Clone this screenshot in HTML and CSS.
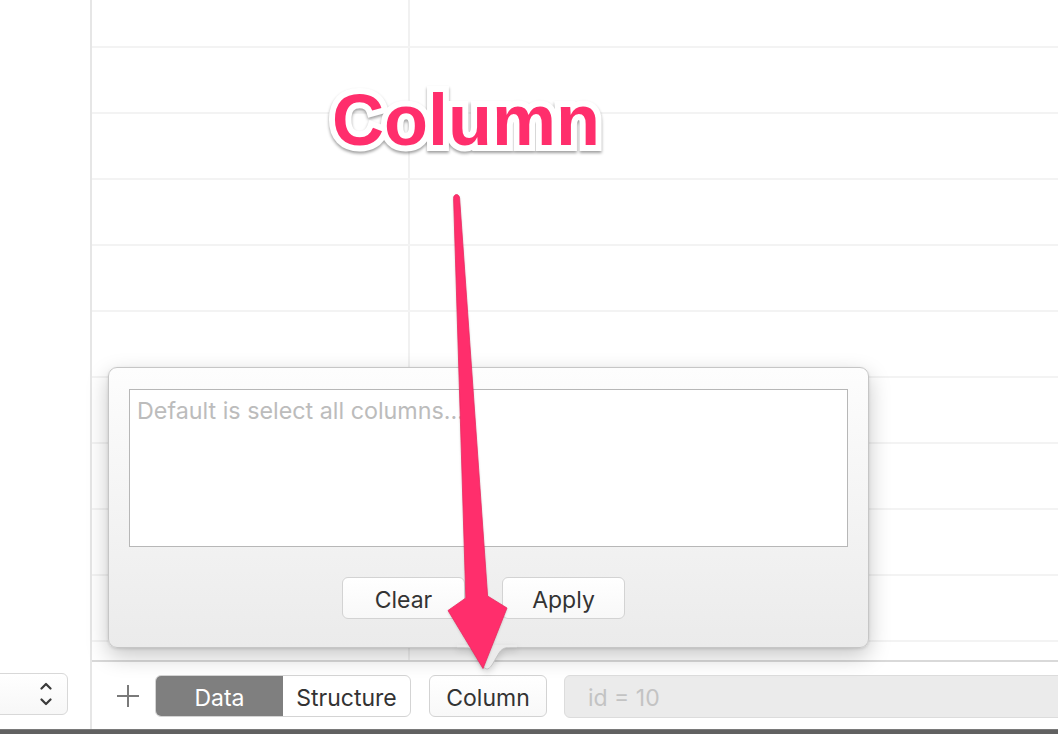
FILE: index.html
```html
<!DOCTYPE html>
<html lang="en">
<head>
<meta charset="utf-8">
<title>Column filter</title>
<link rel="stylesheet" href="styles.css">
</head>
<body>
<div class="window">
  <aside class="sidebar">
    <div class="popup">
      <svg class="updown" width="12" height="26" viewBox="0 0 12 26"><path d="M1.5 7.5 L6 3 L10.5 7.5" fill="none" stroke="#3a3a3a" stroke-width="2.2" stroke-linecap="round" stroke-linejoin="round"/><path d="M1.5 18.5 L6 23 L10.5 18.5" fill="none" stroke="#3a3a3a" stroke-width="2.2" stroke-linecap="round" stroke-linejoin="round"/></svg>
    </div>
  </aside>
  <main class="main">
    <div class="grid">
      <div class="row first"><div class="cell c1"></div><div class="cell c2"></div></div>
      <div class="row"><div class="cell c1"></div><div class="cell c2"></div></div>
      <div class="row"><div class="cell c1"></div><div class="cell c2"></div></div>
      <div class="row"><div class="cell c1"></div><div class="cell c2"></div></div>
      <div class="row"><div class="cell c1"></div><div class="cell c2"></div></div>
      <div class="row"><div class="cell c1"></div><div class="cell c2"></div></div>
      <div class="row"><div class="cell c1"></div><div class="cell c2"></div></div>
      <div class="row"><div class="cell c1"></div><div class="cell c2"></div></div>
      <div class="row"><div class="cell c1"></div><div class="cell c2"></div></div>
      <div class="row"><div class="cell c1"></div><div class="cell c2"></div></div>
      <div class="row last"><div class="cell c1"></div><div class="cell c2"></div></div>
    </div>
    <div class="bottombar">
      <span class="plus"><svg width="22" height="22" viewBox="0 0 22 22"><path d="M11 0 V22 M0 11 H22" stroke="#7a7a7a" stroke-width="2" fill="none"/></svg></span>
      <div class="segmented"><span class="seg on">Data</span><span class="seg">Structure</span></div>
      <span class="btn colbtn">Column</span>
      <div class="filter">id = 10</div>
    </div>
  </main>
</div>
<div class="strip"></div>

<div class="popover">
  <div class="textarea">Default is select all columns...</div>
  <div class="actions">
    <span class="btn pbtn">Clear</span>
    <span class="btn pbtn">Apply</span>
  </div>
  <svg class="tip" width="60" height="26" viewBox="0 0 60 26"><path d="M0 2 C10 2 14 2 18 8 L25 20 C27 23 29 24 30 24 C31 24 33 23 35 20 L42 8 C46 2 50 2 60 2" fill="#ebebeb" stroke="#c2c2c2" stroke-width="1"/><rect x="0" y="0" width="60" height="2.2" fill="#ebebeb"/></svg>
</div>

<div class="annot">Column</div>

<svg class="arrow" width="1058" height="734" viewBox="0 0 1058 734">
  <path d="M453.6 198.5 C453.4 196 455 194.5 456.5 194.5 C458 194.5 459.5 196 459.6 198.2 L487.6 596 L507 608 L483 668.5 L448 610.5 L465.8 598 Z" fill="#ff2e6c" stroke="#e8295f" stroke-width="0.8" stroke-linejoin="round"/>
</svg>
</body>
</html>
```

FILE: styles.css
```css
* { box-sizing: border-box; }
html, body { margin: 0; padding: 0; }
body {
  width: 1058px;
  height: 734px;
  overflow: hidden;
  position: relative;
  background: #fff;
  font-family: Inter, "Noto Sans", "Liberation Sans", sans-serif;
  color: #333;
}
.window {
  display: flex;
  height: 729px;
}
.sidebar {
  width: 92px;
  flex: none;
  border-right: 2px solid #e6e6e6;
  display: flex;
  flex-direction: column;
  justify-content: flex-end;
  padding-bottom: 14px;
}
.popup {
  margin-left: -12px;
  width: 80px;
  height: 42px;
  border: 1px solid #d8d8d8;
  border-radius: 6px;
  background: linear-gradient(#ffffff, #f7f7f7);
  display: flex;
  align-items: center;
  justify-content: flex-end;
  padding-right: 15px;
}
.main {
  flex: 1;
  display: flex;
  flex-direction: column;
  min-width: 0;
}
.grid {
  flex: 1;
  overflow: hidden;
}
.row {
  display: flex;
  height: 66px;
  border-bottom: 2px solid #f3f3f3;
}
.row.first { height: 48px; }
.row.last { border-bottom: none; }
.cell.c1 { width: 318px; border-right: 2px solid #f1f1f1; }
.cell.c2 { flex: 1; }
.bottombar {
  height: 69px;
  flex: none;
  border-top: 2px solid #d9d9d9;
  display: flex;
  align-items: center;
  padding-left: 25px;
  padding-top: 1px;
}
.plus { width: 22px; height: 22px; display: flex; margin-right: 16px; }
.segmented {
  display: flex;
  width: 256px;
  height: 42px;
  border: 1px solid #d4d4d4;
  border-radius: 6px;
  overflow: hidden;
  margin-right: 18px;
  background: #fff;
}
.seg {
  flex: 1;
  display: flex;
  align-items: center;
  justify-content: center;
  font-size: 23px;
  color: #333;
  padding-top: 3px;
}
.seg.on { background: #7f7f7f; color: #fff; }
.btn {
  display: flex;
  align-items: center;
  justify-content: center;
  height: 42px;
  border: 1px solid #d3d3d3;
  border-radius: 6px;
  background: linear-gradient(#ffffff, #f8f8f8);
  font-size: 23px;
  color: #333;
  padding-top: 3px;
}
.colbtn { width: 118px; margin-right: 17px; }
.filter {
  flex: 1;
  height: 43px;
  margin-right: -10px;
  background: #ebebeb;
  border: 1px solid #dcdcdc;
  border-radius: 6px;
  display: flex;
  align-items: center;
  padding-left: 23px;
  padding-top: 3px;
  font-size: 23px;
  color: #c3c3c3;
}
.strip {
  height: 5px;
  background: #616161;
  border-top: 1px solid #7a7a7a;
}
.popover {
  position: absolute;
  left: 108px;
  top: 367px;
  width: 761px;
  height: 281px;
  border: 1px solid #c6c6c6;
  border-radius: 9px;
  background: linear-gradient(#fdfdfd, #ebebeb);
  box-shadow: 0 8px 22px rgba(0,0,0,0.22), 0 1px 3px rgba(0,0,0,0.12);
  padding: 21px 20px 0 20px;
  display: flex;
  flex-direction: column;
}
.textarea {
  height: 158px;
  border: 1px solid #b7b7b7;
  background: #fff;
  padding: 6px 7px;
  font-size: 23.3px;
  color: #bcbcbc;
  line-height: 30px;
}
.actions {
  display: flex;
  justify-content: center;
  gap: 37px;
  margin-top: 30px;
  padding-right: 10px;
}
.pbtn { width: 123px; height: 42px; }
.tip {
  position: absolute;
  left: 348px;
  bottom: -24px;
  filter: drop-shadow(0 3px 3px rgba(0,0,0,0.15));
}
.annot {
  position: absolute;
  left: 332px;
  top: 77px;
  font-family: "Liberation Sans", Arial, sans-serif;
  font-weight: 700;
  font-size: 72px;
  line-height: 86px;
  color: #ff2e6c;
  -webkit-text-stroke: 12px #fff;
  paint-order: stroke fill;
  filter: drop-shadow(0 2px 1.5px rgba(0,0,0,0.38));
}
.arrow {
  position: absolute;
  left: 0;
  top: 0;
  pointer-events: none;
  filter: drop-shadow(0 1px 1px rgba(0,0,0,0.15));
}
```
